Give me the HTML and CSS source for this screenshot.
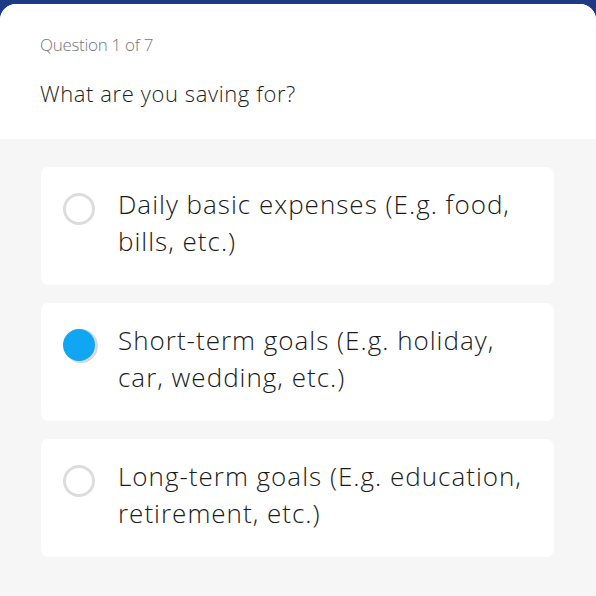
FILE: index.html
```html
<!DOCTYPE html>
<html>
<head>
<meta charset="utf-8">
<link rel="stylesheet" href="styles.css">
</head>
<body>
<div class="screen">
  <div class="header">
    <div class="counter">Question 1 of 7</div>
    <div class="question">What are you saving for?</div>
  </div>
  <div class="options">
    <div class="option">
      <span class="radio"></span>
      <span class="label">Daily basic expenses (E.g. food,<br>bills, etc.)</span>
    </div>
    <div class="option">
      <span class="radio checked"></span>
      <span class="label">Short-term goals (E.g. holiday,<br>car, wedding, etc.)</span>
    </div>
    <div class="option">
      <span class="radio"></span>
      <span class="label">Long-term goals (E.g. education,<br>retirement, etc.)</span>
    </div>
  </div>
</div>
</body>
</html>
```
FILE: styles.css
```css
html, body {
  margin: 0;
  padding: 0;
  background: #1c3a86;
}
body {
  width: 596px;
  height: 596px;
  overflow: hidden;
  font-family: "Open Sans", "Noto Sans", sans-serif;
}
.screen {
  margin-top: 4px;
  height: 592px;
  background: #f6f6f6;
  border-radius: 16px 16px 0 0;
  overflow: hidden;
}
.header {
  background: #ffffff;
  padding: 30px 40px 0 40px;
  height: 105px;
}
.counter {
  font-size: 17px;
  font-weight: 350;
  letter-spacing: -0.3px;
  color: #777777;
  line-height: 22px;
}
.question {
  margin-top: 23px;
  font-size: 22px;
  font-weight: 350;
  letter-spacing: 0.6px;
  color: #1e1e1e;
  line-height: 28px;
}
.options {
  padding: 28px 42px 0 41px;
  display: flex;
  flex-direction: column;
  gap: 18px;
}
.option {
  background: #ffffff;
  border-radius: 8px;
  height: 118px;
  display: flex;
  align-items: flex-start;
  padding: 0 20px 0 22px;
  box-sizing: border-box;
}
.radio {
  flex: none;
  width: 32px;
  height: 32px;
  box-sizing: border-box;
  border: 3px solid #dcdcdc;
  border-radius: 50%;
  margin-top: 26px;
}
.radio.checked {
  background: #10a6f2;
  border: none;
  box-shadow: 2px 1px 0 1px #d8d8d8;
}
.label {
  margin-left: 23px;
  margin-top: 19px;
  font-size: 26px;
  font-weight: 350;
  letter-spacing: 1px;
  line-height: 37px;
  color: #1a1a1a;
  white-space: nowrap;
}
```
